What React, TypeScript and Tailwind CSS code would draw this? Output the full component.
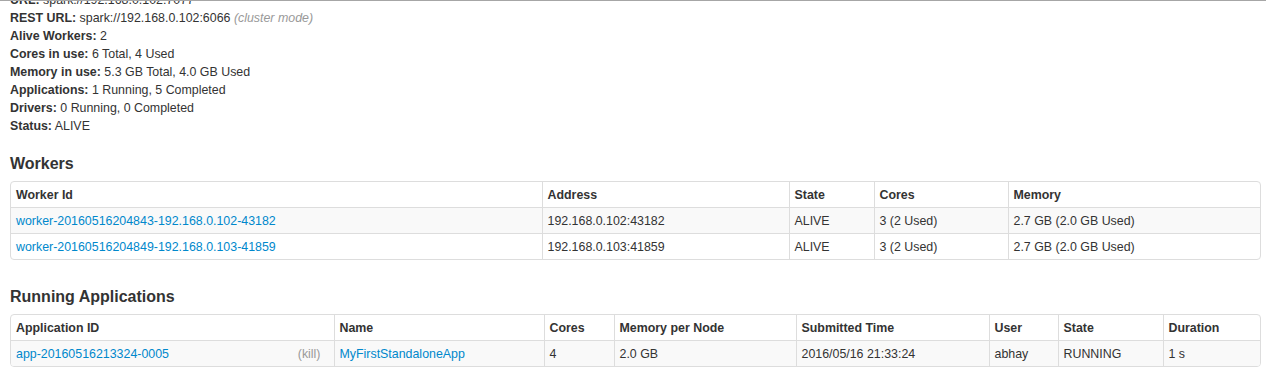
import React from 'react';

const info: [string, React.ReactNode][] = [
  ['URL:', 'spark://192.168.0.102:7077'],
  [
    'REST URL:',
    <>
      spark://192.168.0.102:6066 <em className="text-[#999]">(cluster mode)</em>
    </>,
  ],
  ['Alive Workers:', '2'],
  ['Cores in use:', '6 Total, 4 Used'],
  ['Memory in use:', '5.3 GB Total, 4.0 GB Used'],
  ['Applications:', '1 Running, 5 Completed'],
  ['Drivers:', '0 Running, 0 Completed'],
  ['Status:', 'ALIVE'],
];

const workers = [
  ['worker-20160516204843-192.168.0.102-43182', '192.168.0.102:43182', 'ALIVE', '3 (2 Used)', '2.7 GB (2.0 GB Used)'],
  ['worker-20160516204849-192.168.0.103-41859', '192.168.0.103:41859', 'ALIVE', '3 (2 Used)', '2.7 GB (2.0 GB Used)'],
];

const th = 'border-l border-[#ddd] first:border-l-0 px-[5px] pt-[5px] pb-[3px] text-left font-bold';
const td = 'border-l border-[#ddd] first:border-l-0 px-[5px] pt-[5px] pb-[3px]';

export default function App() {
  return (
    <div
      className="h-[367px] overflow-hidden border-t border-[#a6a6a6] bg-white pl-[10px] pr-[5px] text-[12.4px] leading-[18px] text-[#333]"
      style={{ fontFamily: '"Liberation Sans", Arial, sans-serif' }}
    >
      <ul className="-mt-[10px]">
        {info.map(([k, v]) => (
          <li key={k}>
            <strong>{k}</strong> {v}
          </li>
        ))}
      </ul>

      <h4 className="mt-[18px] pt-[1px] text-[16px] font-bold leading-[20px]">Workers</h4>
      <div className="mt-[7px] overflow-hidden rounded-[4px] border border-[#ddd]">
        <table className="w-full table-fixed border-collapse leading-[17px]">
          <colgroup>
            <col className="w-[531px]" />
            <col className="w-[247px]" />
            <col className="w-[85px]" />
            <col className="w-[134px]" />
            <col />
          </colgroup>
          <thead>
            <tr>
              <th className={th}>Worker Id</th>
              <th className={th}>Address</th>
              <th className={th}>State</th>
              <th className={th}>Cores</th>
              <th className={th}>Memory</th>
            </tr>
          </thead>
          <tbody>
            {workers.map((w, i) => (
              <tr key={w[0]} className={`border-t border-[#ddd] ${i % 2 === 0 ? 'bg-[#f9f9f9]' : ''}`}>
                <td className={td}>
                  <a className="text-[#0088cc]">{w[0]}</a>
                </td>
                <td className={td}>{w[1]}</td>
                <td className={td}>{w[2]}</td>
                <td className={td}>{w[3]}</td>
                <td className={td}>{w[4]}</td>
              </tr>
            ))}
          </tbody>
        </table>
      </div>

      <h4 className="mt-[26px] pt-[1px] text-[16px] font-bold leading-[20px]">Running Applications</h4>
      <div className="mt-[7px] overflow-hidden rounded-[4px] border border-[#ddd]">
        <table className="w-full table-fixed border-collapse leading-[17px]">
          <colgroup>
            <col className="w-[323px]" />
            <col className="w-[210px]" />
            <col className="w-[70px]" />
            <col className="w-[182px]" />
            <col className="w-[193px]" />
            <col className="w-[69px]" />
            <col className="w-[105px]" />
            <col />
          </colgroup>
          <thead>
            <tr>
              <th className={th}>Application ID</th>
              <th className={th}>Name</th>
              <th className={th}>Cores</th>
              <th className={th}>Memory per Node</th>
              <th className={th}>Submitted Time</th>
              <th className={th}>User</th>
              <th className={th}>State</th>
              <th className={th}>Duration</th>
            </tr>
          </thead>
          <tbody>
            <tr className="border-t border-[#ddd] bg-[#f9f9f9]">
              <td className={td}>
                <div className="flex justify-between">
                  <a className="text-[#0088cc]">app-20160516213324-0005</a>
                  <span className="pr-[8px] text-[#999]">(kill)</span>
                </div>
              </td>
              <td className={td}>
                <a className="text-[#0088cc]">MyFirstStandaloneApp</a>
              </td>
              <td className={td}>4</td>
              <td className={td}>2.0 GB</td>
              <td className={td}>2016/05/16 21:33:24</td>
              <td className={td}>abhay</td>
              <td className={td}>RUNNING</td>
              <td className={td}>1 s</td>
            </tr>
          </tbody>
        </table>
      </div>
    </div>
  );
}
